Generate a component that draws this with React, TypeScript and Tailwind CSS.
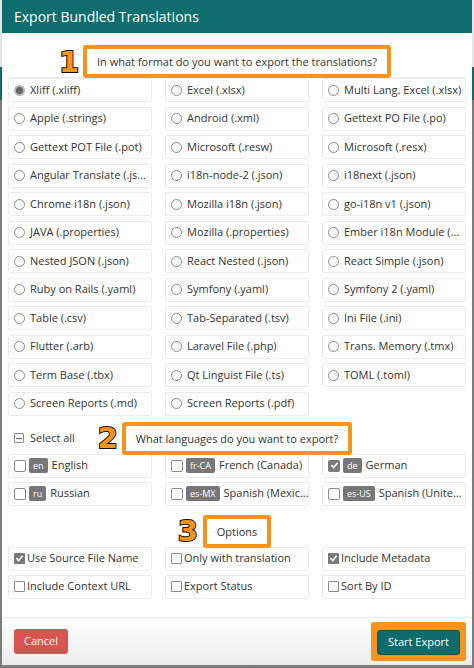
import type { ReactNode } from "react";

const FORMATS = [
  "Xliff (.xliff)", "Excel (.xlsx)", "Multi Lang. Excel (.xlsx)",
  "Apple (.strings)", "Android (.xml)", "Gettext PO File (.po)",
  "Gettext POT File (.pot)", "Microsoft (.resw)", "Microsoft (.resx)",
  "Angular Translate (.js...", "i18n-node-2 (.json)", "i18next (.json)",
  "Chrome i18n (.json)", "Mozilla i18n (.json)", "go-i18n v1 (.json)",
  "JAVA (.properties)", "Mozilla (.properties)", "Ember i18n Module (...",
  "Nested JSON (.json)", "React Nested (.json)", "React Simple (.json)",
  "Ruby on Rails (.yaml)", "Symfony (.yaml)", "Symfony 2 (.yaml)",
  "Table (.csv)", "Tab-Separated (.tsv)", "Ini File (.ini)",
  "Flutter (.arb)", "Laravel File (.php)", "Trans. Memory (.tmx)",
  "Term Base (.tbx)", "Qt Linguist File (.ts)", "TOML (.toml)",
  "Screen Reports (.md)", "Screen Reports (.pdf)",
];

const LANGS = [
  { code: "en", name: "English", checked: false },
  { code: "fr-CA", name: "French (Canada)", checked: false },
  { code: "de", name: "German", checked: true },
  { code: "ru", name: "Russian", checked: false },
  { code: "es-MX", name: "Spanish (Mexic...", checked: false },
  { code: "es-US", name: "Spanish (Unite...", checked: false },
];

const OPTIONS = [
  { label: "Use Source File Name", checked: true },
  { label: "Only with translation", checked: false },
  { label: "Include Metadata", checked: true },
  { label: "Include Context URL", checked: false },
  { label: "Export Status", checked: false },
  { label: "Sort By ID", checked: false },
];

function Cell({ children }: { children: ReactNode }) {
  return (
    <div className="flex h-[24px] items-center overflow-hidden whitespace-nowrap rounded-[2px] border border-[#ececec] px-[5px]">
      {children}
    </div>
  );
}

function Radio({ checked }: { checked: boolean }) {
  return checked ? (
    <span className="h-[11px] w-[11px] shrink-0 rounded-full border-2 border-[#b5b5b5] bg-[#666]" />
  ) : (
    <span className="h-[11px] w-[11px] shrink-0 rounded-full border border-[#8a8a8a] bg-white" />
  );
}

function Check({ checked, size = "lg" }: { checked: boolean; size?: "lg" | "sm" }) {
  const box = size === "lg" ? "h-[12px] w-[12px] rounded-[2px]" : "h-[11px] w-[11px] rounded-[1px]";
  return checked ? (
    <span className={`${box} flex shrink-0 items-center justify-center bg-[#7a7a7a]`}>
      <svg viewBox="0 0 10 10" className="h-[9px] w-[9px]" fill="none" stroke="#fff" strokeWidth="1.8" strokeLinecap="round" strokeLinejoin="round">
        <path d="M2 5.2 4.2 7.3 8 2.6" />
      </svg>
    </span>
  ) : (
    <span className={`${box} shrink-0 border border-[#8a8a8a] bg-white`} />
  );
}

function Callout({ n, text, numLeft }: { n: string; text: string; numLeft: string }) {
  return (
    <div className="relative">
      <span
        className={`absolute top-1/2 -translate-y-1/2 ${numLeft} text-[29px] font-black leading-none text-[#f7941d] [-webkit-text-stroke:2px_#111] [paint-order:stroke_fill] [font-family:'DejaVu_Sans',Arial,sans-serif]`}
      >
        {n}
      </span>
      <div className="rounded-[3px] border-[4px] border-[#f7941d] bg-white px-[10px] py-[5px] text-[11px] leading-[15px] text-[#333]">
        {text}
      </div>
    </div>
  );
}

export default function App() {
  return (
    <div className="h-[668px] w-[474px] overflow-hidden bg-[linear-gradient(to_bottom,#e4e4e4_0,#e4e4e4_67px,#0e6b6b_67px,#0e6b6b_100px,#7b7b7b_100px)] [font-family:'Open_Sans',Arial,sans-serif]">
      <div className="mx-[2px] flex h-[665px] flex-col bg-white">
        <div className="flex h-[33px] items-center bg-[#0e6e6d] px-[12px] text-[14px] text-white">
          Export Bundled Translations
        </div>

        <div className="flex flex-col px-[6px]">
          <div className="relative z-10 mt-[12px] -mb-[1px] flex justify-center">
            <Callout n="1" text="In what format do you want to export the translations?" numLeft="-left-[24px]" />
          </div>

          <div className="grid grid-cols-3 gap-x-[13px] gap-y-[4.5px] border-t border-[#ececec] text-[11px] text-[#333]">
            {FORMATS.map((f, i) => (
              <Cell key={f}>
                <Radio checked={i === 0} />
                <span className="ml-[5px]">{f}</span>
              </Cell>
            ))}
          </div>

          <div className="relative z-10 mt-[6px] -mb-[1px] grid grid-cols-[1fr_auto_1fr] items-center">
            <div className="flex items-center pl-[6px] text-[11px] text-[#333]">
              <span className="flex h-[10px] w-[10px] items-center justify-center rounded-[1px] border border-[#8a8a8a]">
                <span className="h-px w-[6px] bg-[#666]" />
              </span>
              <span className="ml-[6px]">Select all</span>
            </div>
            <Callout n="2" text="What languages do you want to export?" numLeft="-left-[24px]" />
            <div />
          </div>

          <div className="grid grid-cols-3 gap-x-[13px] gap-y-[4px] text-[11px] text-[#333]">
            {LANGS.map((l) => (
              <Cell key={l.code}>
                <Check checked={l.checked} />
                <span className="ml-[3px] rounded-[2px] bg-[#777] px-[4px] text-[9px] leading-[15px] text-white">{l.code}</span>
                <span className="ml-[4px]">{l.name}</span>
              </Cell>
            ))}
          </div>

          <div className="relative z-10 mt-[9px] -mb-[1px] flex justify-center">
            <Callout n="3" text="Options" numLeft="-left-[25px]" />
          </div>

          <div className="grid grid-cols-3 gap-x-[13px] gap-y-[4px] text-[11px] text-[#333]">
            {OPTIONS.map((o) => (
              <Cell key={o.label}>
                <Check checked={o.checked} size="sm" />
                <span className="ml-[2px]">{o.label}</span>
              </Cell>
            ))}
          </div>
        </div>

        <div className="mt-auto flex h-[48px] items-center justify-between border-t border-[#e8e8e8] bg-[linear-gradient(to_bottom,#ffffff,#ececec)] pl-[12px] pr-[6px]">
          <button className="h-[25px] rounded-[3px] bg-[#d9534f] px-[10px] text-[11px] text-white">Cancel</button>
          <div className="rounded-[3px] bg-[#f7941d] p-[6px]">
            <button className="h-[25px] rounded-[3px] border border-[#0a5656] bg-[#0e6b6b] px-[10px] text-[11px] text-white">
              Start Export
            </button>
          </div>
        </div>
      </div>
    </div>
  );
}
